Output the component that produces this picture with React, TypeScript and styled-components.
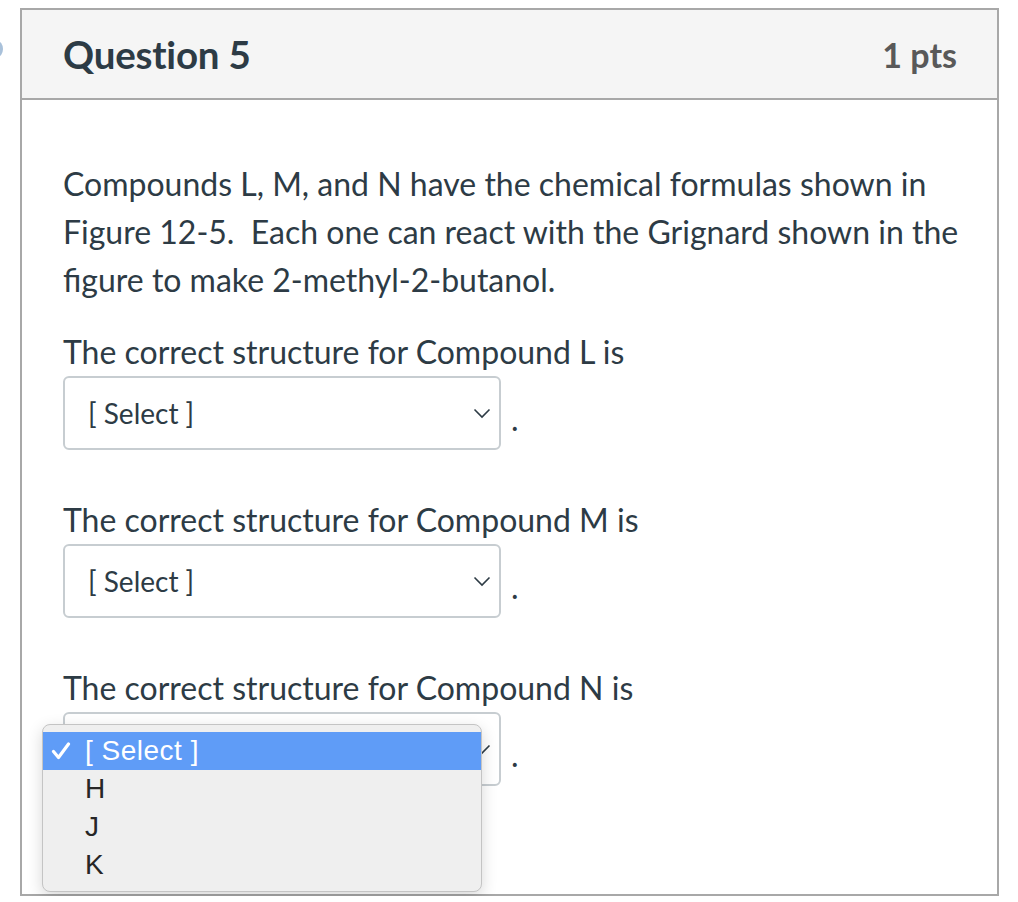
import React from "react";
import styled, { createGlobalStyle } from "styled-components";

const Global = createGlobalStyle`
  html, body { margin: 0; padding: 0; background: #ffffff; }
  body { font-family: Lato, "Open Sans", sans-serif; color: #2d3b45; }
  * { box-sizing: border-box; }
`;

const Page = styled.div`
  position: relative;
  padding: 8px 19px 0 20px;
`;

const NavDot = styled.div`
  position: absolute;
  left: -9px;
  top: 41px;
  width: 12px;
  height: 16px;
  border-radius: 50%;
  background: #a9c1da;
`;

const Card = styled.div`
  border: 2px solid #a8a8a8;
  background: #ffffff;
`;

const Header = styled.div`
  height: 90px;
  background: #f5f5f5;
  border-bottom: 2px solid #a8a8a8;
  display: flex;
  align-items: center;
  justify-content: space-between;
  padding: 0 40px 0 41px;
`;

const Title = styled.h2`
  margin: 0;
  font-family: Lato, sans-serif;
  font-weight: 700;
  font-size: 38.5px;
  color: #2d3b45;
  letter-spacing: -0.2px;
`;

const Points = styled.div`
  font-family: Lato, sans-serif;
  font-weight: 700;
  font-size: 34px;
  color: #595959;
`;

const Body = styled.div`
  padding: 60px 28px 108px 41px;
  display: flex;
  flex-direction: column;
`;

const Text = styled.p<{ $gap?: number }>`
  margin: 0 0 ${(p) => p.$gap ?? 0}px 0;
  font-family: Lato, sans-serif;
  font-size: 32px;
  line-height: 48px;
  color: #2d3b45;
`;

const SelectRow = styled.div<{ $gap?: number }>`
  position: relative;
  display: flex;
  align-items: flex-end;
  margin-bottom: ${(p) => p.$gap ?? 0}px;
`;

const SelectBox = styled.div`
  width: 438px;
  height: 74px;
  border: 2px solid #c7cdd1;
  border-radius: 6px;
  background: #fff;
  display: flex;
  align-items: center;
  justify-content: space-between;
  padding: 0 8px 0 23px;
  font-family: Lato, sans-serif;
  font-size: 28px;
  color: #2d3b45;
`;

const Period = styled.span`
  font-family: Lato, sans-serif;
  font-size: 32px;
  line-height: 32px;
  margin: 0 0 15px 10px;
  color: #2d3b45;
`;

const Menu = styled.div`
  position: absolute;
  left: -21px;
  top: 12px;
  width: 440px;
  padding: 7px 0;
  background: #efefef;
  border: 1px solid #c4c4c4;
  border-radius: 8px;
  box-shadow: 0 5px 16px rgba(0, 0, 0, 0.16);
  z-index: 5;
`;

const Option = styled.div<{ $active?: boolean }>`
  height: 38px;
  display: flex;
  align-items: center;
  padding-left: 8px;
  background: ${(p) => (p.$active ? "#5f9cf7" : "transparent")};
  color: ${(p) => (p.$active ? "#ffffff" : "#262626")};
  font-family: "Liberation Sans", Arial, sans-serif;
  font-size: 28px;
  letter-spacing: 0.5px;
`;

const CheckSlot = styled.span`
  width: 34px;
  display: flex;
  align-items: center;
`;

const Chevron = () => (
  <svg width="18" height="11" viewBox="0 0 18 11">
    <polyline points="1.5,1.5 9,9 16.5,1.5" fill="none" stroke="#2d3b45" strokeWidth="1.6" />
  </svg>
);

const Check = () => (
  <svg width="20" height="18" viewBox="0 0 20 18">
    <polyline points="2.5,9.5 7.5,15.5 17.5,2" fill="none" stroke="#ffffff" strokeWidth="3.2" strokeLinecap="round" strokeLinejoin="round" />
  </svg>
);

const Select = () => (
  <SelectBox>
    <span>[ Select ]</span>
    <Chevron />
  </SelectBox>
);

export default function App() {
  return (
    <>
      <Global />
      <Page>
        <NavDot />
        <Card>
          <Header>
            <Title>Question 5</Title>
            <Points>1 pts</Points>
          </Header>
          <Body>
            <Text $gap={24}>
              Compounds L, M, and N have the chemical formulas shown in Figure 12-5.&nbsp; Each one can react with the
              Grignard shown in the figure to make 2-methyl-2-butanol.
            </Text>
            <Text>The correct structure for Compound L is</Text>
            <SelectRow $gap={46}>
              <Select />
              <Period>.</Period>
            </SelectRow>
            <Text>The correct structure for Compound M is</Text>
            <SelectRow $gap={46}>
              <Select />
              <Period>.</Period>
            </SelectRow>
            <Text>The correct structure for Compound N is</Text>
            <SelectRow>
              <Select />
              <Period>.</Period>
              <Menu>
                <Option $active>
                  <CheckSlot>
                    <Check />
                  </CheckSlot>
                  [ Select ]
                </Option>
                <Option>
                  <CheckSlot />H
                </Option>
                <Option>
                  <CheckSlot />J
                </Option>
                <Option>
                  <CheckSlot />K
                </Option>
              </Menu>
            </SelectRow>
          </Body>
        </Card>
      </Page>
    </>
  );
}
